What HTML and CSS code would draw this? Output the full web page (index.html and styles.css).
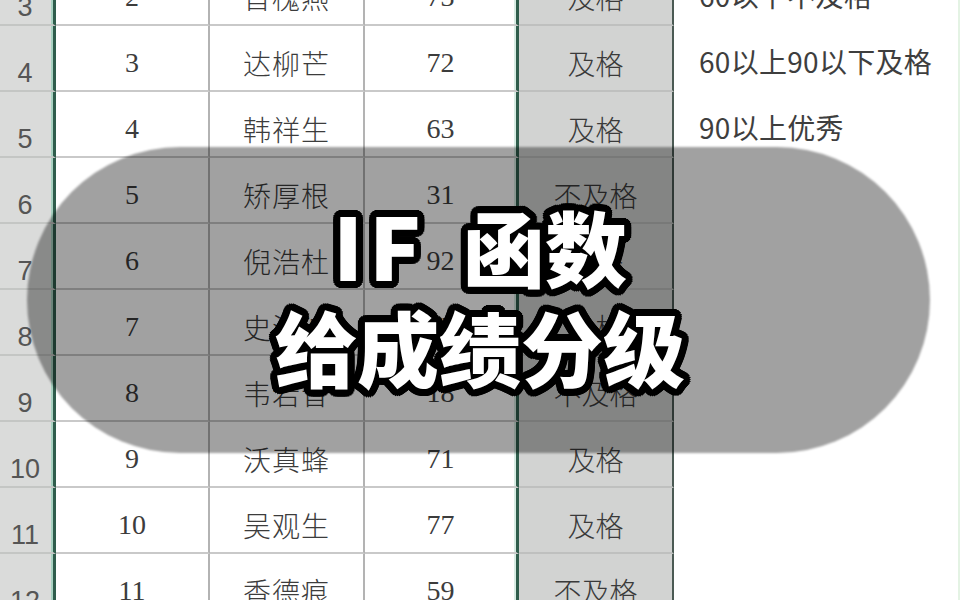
FILE: index.html
```html
<!DOCTYPE html>
<html lang="zh-CN">
<head>
<meta charset="utf-8">
<title>IF 函数 给成绩分级</title>
<link rel="stylesheet" href="styles.css">
</head>
<body>
<div class="stage">
  <div class="sheet">
    <div class="row">
      <div class="hdr">3</div><div class="c num">2</div><div class="c name">晋槐燕</div><div class="c num">73</div><div class="c grade">及格</div><div class="c note">60以下不及格</div>
    </div>
    <div class="row">
      <div class="hdr">4</div><div class="c num">3</div><div class="c name">达柳芒</div><div class="c num">72</div><div class="c grade">及格</div><div class="c note">60以上90以下及格</div>
    </div>
    <div class="row">
      <div class="hdr">5</div><div class="c num">4</div><div class="c name">韩祥生</div><div class="c num">63</div><div class="c grade">及格</div><div class="c note">90以上优秀</div>
    </div>
    <div class="row">
      <div class="hdr">6</div><div class="c num">5</div><div class="c name">矫厚根</div><div class="c num">31</div><div class="c grade">不及格</div><div class="c note"></div>
    </div>
    <div class="row">
      <div class="hdr">7</div><div class="c num">6</div><div class="c name">倪浩杜</div><div class="c num">92</div><div class="c grade">优秀</div><div class="c note"></div>
    </div>
    <div class="row">
      <div class="hdr">8</div><div class="c num">7</div><div class="c name">史海波</div><div class="c num">85</div><div class="c grade">及格</div><div class="c note"></div>
    </div>
    <div class="row">
      <div class="hdr">9</div><div class="c num">8</div><div class="c name">韦若昔</div><div class="c num">18</div><div class="c grade">不及格</div><div class="c note"></div>
    </div>
    <div class="row">
      <div class="hdr">10</div><div class="c num">9</div><div class="c name">沃真蜂</div><div class="c num">71</div><div class="c grade">及格</div><div class="c note"></div>
    </div>
    <div class="row">
      <div class="hdr">11</div><div class="c num">10</div><div class="c name">吴观生</div><div class="c num">77</div><div class="c grade">及格</div><div class="c note"></div>
    </div>
    <div class="row">
      <div class="hdr">12</div><div class="c num">11</div><div class="c name">香德痕</div><div class="c num">59</div><div class="c grade">不及格</div><div class="c note"></div>
    </div>
  </div>

  <div class="pill"></div>
  <div class="title">
    <div class="line"><span class="latin">IF</span><span class="gap"></span>函数</div>
    <div class="line">给成绩分级</div>
  </div>
</div>
</body>
</html>
```
FILE: styles.css
```css
* { box-sizing: border-box; }
html, body { margin: 0; padding: 0; background: #ffffff; }

.stage {
  position: relative;
  width: 960px;
  height: 600px;
  overflow: hidden;
  background: #ffffff;
}

.sheet {
  margin-top: -40px;
  display: flex;
  flex-direction: column;
}

.row {
  display: grid;
  grid-template-columns: 56px 154px 155px 154px 155px 1fr;
  height: 66px;
}

.hdr {
  background: #dadbda;
  border-bottom: 2px solid #c4c6c4;
  border-right: 3px solid #2f5d4c;
  box-shadow: inset -2px 0 0 #a9d2c2;
  color: #555555;
  font-family: "Liberation Sans", "DejaVu Sans", sans-serif;
  font-size: 27px;
  display: flex;
  align-items: flex-end;
  justify-content: center;
  padding-bottom: 1px;
  padding-right: 3px;
}

.c {
  display: flex;
  align-items: center;
  justify-content: center;
  padding-top: 9px;
  border-bottom: 2px solid #c9c9c9;
  border-right: 2px solid #b3b3b3;
  color: #3c3c3c;
  font-size: 28px;
}

.num {
  font-family: "Liberation Serif", "DejaVu Serif", serif;
}

.name {
  font-family: "Noto Sans CJK SC", sans-serif;
  font-weight: 300;
  letter-spacing: 1px;
}

.grade {
  background: #d2d3d2;
  border-bottom-color: #bfc0bf;
  border-right: 2px solid #4b5a54;
  font-family: "Noto Sans CJK SC", sans-serif;
  font-weight: 300;
  color: #3a3a3a;
}

.row > .c:nth-child(4) {
  border-right: 3px solid #2f5d4c;
  box-shadow: inset -2px 0 0 #d8ece4;
}

.note {
  border: none;
  border-right: 2px solid #e4f3e4;
  justify-content: flex-start;
  padding-left: 25px;
  padding-top: 4px;
  font-family: "Noto Sans CJK SC", sans-serif;
  font-weight: 400;
  font-size: 28px;
  letter-spacing: 0.3px;
  color: #3e3e3e;
  white-space: nowrap;
}

.pill {
  position: absolute;
  left: 27px;
  top: 147px;
  width: 903px;
  height: 306px;
  border-radius: 153px;
  background: rgba(0, 0, 0, 0.37);
  filter: blur(1px);
}

.title {
  position: absolute;
  left: 0;
  right: 0;
  top: 194px;
  display: flex;
  flex-direction: column;
  align-items: center;
  font-family: "Noto Sans CJK SC", sans-serif;
  font-weight: 900;
  font-size: 82px;
  line-height: 100px;
  color: #ffffff;
  text-shadow:
    7px 0 0 #000, -7px 0 0 #000, 0 7px 0 #000, 0 -7px 0 #000,
    5px 5px 0 #000, -5px 5px 0 #000, 5px -5px 0 #000, -5px -5px 0 #000,
    7px 2px 0 #000, -7px 2px 0 #000, 7px -2px 0 #000, -7px -2px 0 #000,
    2px 7px 0 #000, -2px 7px 0 #000, 2px -7px 0 #000, -2px -7px 0 #000,
    6px 4px 0 #000, -6px 4px 0 #000, 6px -4px 0 #000, -6px -4px 0 #000,
    4px 6px 0 #000, -4px 6px 0 #000, 4px -6px 0 #000, -4px -6px 0 #000,
    3px 3px 0 #000, -3px 3px 0 #000, 3px -3px 0 #000, -3px -3px 0 #000;
}

.line {
  display: flex;
  align-items: baseline;
  white-space: nowrap;
}

.latin {
  font-size: 86px;
  letter-spacing: 6px;
}

.gap {
  display: inline-block;
  width: 36px;
}
```
